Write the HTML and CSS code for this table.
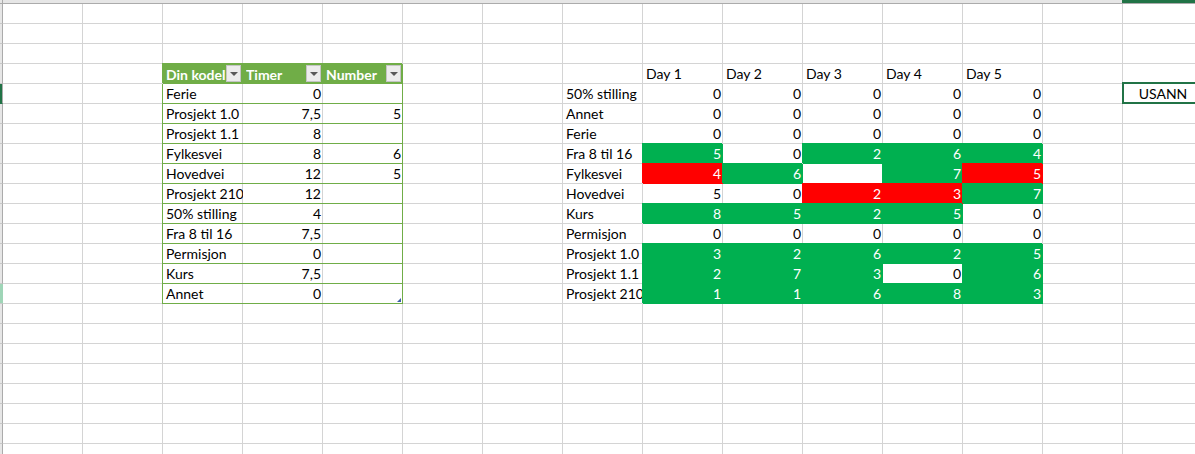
FILE: index.html
```html
<!DOCTYPE html>
<html lang="no">
<head>
<meta charset="utf-8">
<title>Ark1</title>
<link rel="stylesheet" href="styles.css">
</head>
<body>
<div class="sheet">
  <div class="corner"></div>
  <div class="colheads"><div class="colsel"></div></div>
  <div class="rowheads">
    <div class="rh"></div><div class="rh"></div><div class="rh"></div><div class="rh"></div>
    <div class="rh sel"></div>
    <div class="rh"></div><div class="rh"></div><div class="rh"></div><div class="rh"></div><div class="rh"></div>
    <div class="rh"></div><div class="rh"></div><div class="rh"></div><div class="rh"></div>
    <div class="rh hl"></div>
    <div class="rh"></div><div class="rh"></div><div class="rh"></div><div class="rh"></div><div class="rh"></div>
    <div class="rh"></div><div class="rh"></div><div class="rh"></div>
  </div>
  <div class="grid">
    <div class="row"></div>
    <div class="row"></div>
    <div class="row"></div>
    <div class="row">
      <div class="c th t1"><span class="tt">Din kodel</span><span class="fb"></span></div>
      <div class="c th"><span class="tt">Timer</span><span class="fb"></span></div>
      <div class="c th"><span class="tt">Number</span><span class="fb"></span></div>
      <div class="c d1">Day 1</div>
      <div class="c">Day 2</div>
      <div class="c">Day 3</div>
      <div class="c">Day 4</div>
      <div class="c">Day 5</div>
    </div>
    <div class="row">
      <div class="c tb t1">Ferie</div><div class="c tb n">0</div><div class="c tb tl n"></div>
      <div class="c lbl">50% stilling</div>
      <div class="c n">0</div><div class="c n">0</div><div class="c n">0</div><div class="c n">0</div><div class="c n">0</div>
      <div class="c usann">USANN</div>
    </div>
    <div class="row">
      <div class="c tb t1">Prosjekt 1.0</div><div class="c tb n">7,5</div><div class="c tb tl n">5</div>
      <div class="c lbl">Annet</div>
      <div class="c n">0</div><div class="c n">0</div><div class="c n">0</div><div class="c n">0</div><div class="c n">0</div>
    </div>
    <div class="row">
      <div class="c tb t1">Prosjekt 1.1</div><div class="c tb n">8</div><div class="c tb tl n"></div>
      <div class="c lbl">Ferie</div>
      <div class="c n">0</div><div class="c n">0</div><div class="c n">0</div><div class="c n">0</div><div class="c n">0</div>
    </div>
    <div class="row">
      <div class="c tb t1">Fylkesvei</div><div class="c tb n">8</div><div class="c tb tl n">6</div>
      <div class="c lbl">Fra 8 til 16</div>
      <div class="c n g">5</div><div class="c n">0</div><div class="c n g">2</div><div class="c n g">6</div><div class="c n g">4</div>
    </div>
    <div class="row">
      <div class="c tb t1">Hovedvei</div><div class="c tb n">12</div><div class="c tb tl n">5</div>
      <div class="c lbl">Fylkesvei</div>
      <div class="c n r">4</div><div class="c n g">6</div><div class="c n"></div><div class="c n g">7</div><div class="c n r">5</div>
    </div>
    <div class="row">
      <div class="c tb t1">Prosjekt 210</div><div class="c tb n">12</div><div class="c tb tl n"></div>
      <div class="c lbl">Hovedvei</div>
      <div class="c n">5</div><div class="c n">0</div><div class="c n r">2</div><div class="c n r">3</div><div class="c n g">7</div>
    </div>
    <div class="row">
      <div class="c tb t1">50% stilling</div><div class="c tb n">4</div><div class="c tb tl n"></div>
      <div class="c lbl">Kurs</div>
      <div class="c n g">8</div><div class="c n g">5</div><div class="c n g">2</div><div class="c n g">5</div><div class="c n">0</div>
    </div>
    <div class="row">
      <div class="c tb t1">Fra 8 til 16</div><div class="c tb n">7,5</div><div class="c tb tl n"></div>
      <div class="c lbl">Permisjon</div>
      <div class="c n">0</div><div class="c n">0</div><div class="c n">0</div><div class="c n">0</div><div class="c n">0</div>
    </div>
    <div class="row">
      <div class="c tb t1">Permisjon</div><div class="c tb n">0</div><div class="c tb tl n"></div>
      <div class="c lbl">Prosjekt 1.0</div>
      <div class="c n g">3</div><div class="c n g">2</div><div class="c n g">6</div><div class="c n g">2</div><div class="c n g">5</div>
    </div>
    <div class="row">
      <div class="c tb t1">Kurs</div><div class="c tb n">7,5</div><div class="c tb tl n"></div>
      <div class="c lbl">Prosjekt 1.1</div>
      <div class="c n g">2</div><div class="c n g">7</div><div class="c n g">3</div><div class="c n">0</div><div class="c n g">6</div>
    </div>
    <div class="row">
      <div class="c tb t1">Annet</div><div class="c tb n">0</div><div class="c tb tl n end"></div>
      <div class="c lbl">Prosjekt 210</div>
      <div class="c n g">1</div><div class="c n g">1</div><div class="c n g">6</div><div class="c n g">8</div><div class="c n g">3</div>
    </div>
    <div class="row"></div>
    <div class="row"></div>
    <div class="row"></div>
    <div class="row"></div>
    <div class="row"></div>
    <div class="row"></div>
    <div class="row"></div>
    <div class="row"></div>
  </div>
</div>
</body>
</html>
```
FILE: styles.css
```css
*, *::before, *::after { box-sizing: border-box; }
html, body { margin: 0; padding: 0; overflow: hidden; background: #fff; }

.sheet {
  display: grid;
  grid-template-columns: 3px 1192px;
  grid-template-rows: 4px 450px;
  width: 1195px;
  height: 454px;
  overflow: hidden;
  font-family: Lato, "Open Sans", sans-serif;
  font-size: 14px;
  color: #000;
}

.corner {
  background: #e6e6e6;
  border-right: 1px solid #ababab;
  border-bottom: 1px solid #ababab;
}

.colheads {
  display: grid;
  grid-template-columns: repeat(15, 80px);
  background: #e6e6e6;
  border-bottom: 1px solid #ababab;
}
.colsel {
  grid-column-start: 15;
  background: #217346;
  box-shadow: -1px 0 0 #217346;
}

.rowheads {
  display: flex;
  flex-direction: column;
  overflow: hidden;
}
.rh {
  flex: 0 0 20px;
  background: #e6e6e6;
  border-right: 1px solid #ababab;
  border-bottom: 1px solid #c8c8c8;
}
.rh.sel { background: #217346; border-bottom-color: #217346; }
.rh.hl { background: #9fd5b7; border-right-color: #9fd5b7; }

.grid {
  display: flex;
  flex-direction: column;
  overflow: hidden;
}
.row {
  flex: 0 0 20px;
  display: grid;
  grid-template-columns: repeat(15, 80px);
  background-image:
    linear-gradient(to right, transparent 79px, #d4d4d4 79px),
    linear-gradient(to bottom, transparent 19px, #d4d4d4 19px);
  background-size: 80px 20px, 100% 20px;
}

.c {
  height: 20px;
  padding: 0 3px;
  line-height: 19px;
  white-space: nowrap;
  overflow: hidden;
}
.n { text-align: right; padding-right: 2px; }

.t1 { grid-column-start: 3; }
.lbl { grid-column-start: 8; }
.d1 { grid-column-start: 9; }

/* table header */
.th {
  display: flex;
  align-items: center;
  gap: 0;
  padding: 0 2px 0 3px;
  background: #70ad47;
  color: #fff;
  font-weight: bold;
  box-shadow: -1px -1px 0 #70ad47;
}
.tt { flex: 1 1 auto; min-width: 0; overflow: hidden; line-height: 19px; }
.fb {
  flex: 0 0 15px;
  height: 17px;
  margin-bottom: 1px;
  border: 1px solid #c4c4c4;
  background: #ececec;
  display: flex;
  align-items: center;
  justify-content: center;
}
.fb::after {
  content: "";
  border-left: 4px solid transparent;
  border-right: 4px solid transparent;
  border-top: 4px solid #595959;
}

/* table body */
.tb { box-shadow: inset 0 -1px 0 #70ad47; }
.tb.t1 { box-shadow: inset 0 -1px 0 #70ad47, -1px 0 0 #70ad47; }
.tb.tl { box-shadow: inset 0 -1px 0 #70ad47, inset -1px 0 0 #70ad47; }
.tb.end { position: relative; }
.tb.end::after {
  content: "";
  position: absolute;
  right: 2px;
  bottom: 2px;
  border-left: 4px solid transparent;
  border-bottom: 4px solid #3f5fa8;
}

/* conditional formatting */
.g { background: #00b050; color: #fff; box-shadow: -1px -1px 0 #00b050; }
.r { background: #ff0000; color: #fff; box-shadow: -1px -1px 0 #ff0000; }

/* selected cell */
.usann {
  grid-column-start: 15;
  text-align: center;
  position: relative;
  overflow: visible;
}
.usann::before {
  content: "";
  position: absolute;
  left: -1px;
  top: -2px;
  width: 82px;
  bottom: 0;
  border: 2px solid #217346;
}
```
